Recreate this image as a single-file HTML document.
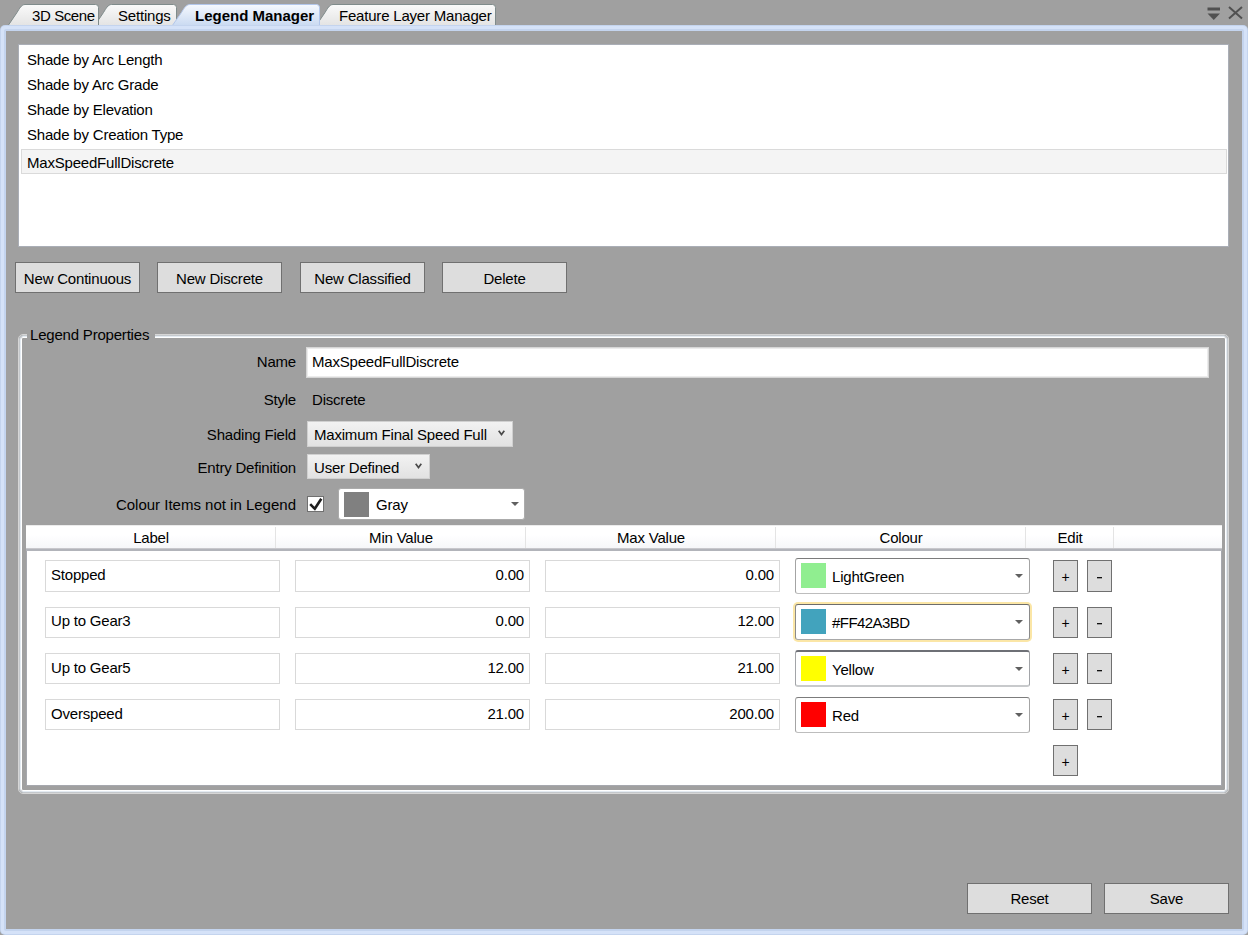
<!DOCTYPE html>
<html><head><meta charset="utf-8">
<style>
html,body{margin:0;padding:0;width:1248px;height:935px;overflow:hidden;background:#a0a0a0;}
body{position:relative;font-family:"Liberation Sans",sans-serif;font-size:15px;letter-spacing:-0.2px;color:#000;}
.a{position:absolute;box-sizing:border-box;}
.t{position:absolute;line-height:20px;white-space:nowrap;}
/* frame */
#frame{left:0;top:25px;width:1248px;height:910px;border-radius:5px;background:#c4d4ee;}
#frame2{left:1px;top:26px;width:1246px;height:908px;border-radius:4px;background:#d5e2f8;}
#frame3{left:4px;top:29px;width:1240px;height:902px;border-radius:2px;background:#c4d4ee;}
#inner{left:6px;top:31px;width:1236px;height:898px;background:#a0a0a0;}
.btn{position:absolute;box-sizing:border-box;background:#dddddd;border:1px solid #707070;text-align:center;}
.tb{position:absolute;box-sizing:border-box;background:#fff;border:1px solid #d9d9d9;}
.combo{position:absolute;box-sizing:border-box;background:#fff;border:1px solid;border-color:#7c7c7c #a4a4a4 #bdbdbd #a4a4a4;border-radius:3px;}
.sw{position:absolute;width:25px;height:25px;}
.arr{position:absolute;width:0;height:0;border-left:4.5px solid transparent;border-right:4.5px solid transparent;border-top:4.5px solid #606060;}
.pm{position:absolute;box-sizing:border-box;background:#dddddd;border:1px solid #707070;width:25px;height:31px;text-align:center;font-size:14px;}
</style></head><body>

<!-- tabs -->
<svg class="a" style="left:0;top:0" width="520" height="27">
  <defs>
    <linearGradient id="tg" x1="0" y1="0" x2="0" y2="1"><stop offset="0" stop-color="#fafafa"/><stop offset="1" stop-color="#e4e4e4"/></linearGradient>
    <linearGradient id="sg" x1="0" y1="0" x2="0" y2="1"><stop offset="0" stop-color="#f6f9fe"/><stop offset="1" stop-color="#c9d9f1"/></linearGradient>
  </defs>
<path d="M316.5,25 L325.0,12.5 C327.5,8.5 329.5,4.5 333.0,4.5 L492.5,4.5 Q495.5,4.5 495.5,7.5 L495.5,25 Z" fill="url(#tg)"/><path d="M316.5,25 L325.0,12.5 C327.5,8.5 329.5,4.5 333.0,4.5 L492.5,4.5 Q495.5,4.5 495.5,7.5 L495.5,25" fill="none" stroke="#7f8b8b" stroke-width="1"/><path d="M95,25 L103.5,12.5 C106,8.5 108,4.5 111.5,4.5 L173.5,4.5 Q176.5,4.5 176.5,7.5 L176.5,25 Z" fill="url(#tg)"/><path d="M95,25 L103.5,12.5 C106,8.5 108,4.5 111.5,4.5 L173.5,4.5 Q176.5,4.5 176.5,7.5 L176.5,25" fill="none" stroke="#7f8b8b" stroke-width="1"/><path d="M8.5,25 L17.0,12.5 C19.5,8.5 21.5,4.5 25.0,4.5 L95.5,4.5 Q98.5,4.5 98.5,7.5 L98.5,25 Z" fill="url(#tg)"/><path d="M8.5,25 L17.0,12.5 C19.5,8.5 21.5,4.5 25.0,4.5 L95.5,4.5 Q98.5,4.5 98.5,7.5 L98.5,25" fill="none" stroke="#7f8b8b" stroke-width="1"/><path d="M172,26 L181.5,12.5 C184,8.5 186,4.5 190,4.5 L316.5,4.5 Q319.5,4.5 319.5,7.5 L319.5,26 Z" fill="url(#sg)"/><path d="M172,26 L181.5,12.5 C184,8.5 186,4.5 190,4.5 L316.5,4.5 Q319.5,4.5 319.5,7.5 L319.5,26" fill="none" stroke="#b2c6ea" stroke-width="1"/>
</svg>
<div class="t" style="left:32px;top:6px;letter-spacing:-0.4px;">3D Scene</div>
<div class="t" style="left:118px;top:6px;">Settings</div>
<div class="t" style="left:195px;top:6px;font-weight:bold;letter-spacing:0;">Legend Manager</div>
<div class="t" style="left:339px;top:6px;">Feature Layer Manager</div>

<!-- top-right icons -->
<svg class="a" style="left:1200px;top:0" width="48" height="25">
  <rect x="7.5" y="7.5" width="12.5" height="3" fill="#505050"/>
  <path d="M7.5,13.5 L20,13.5 L13.75,20 Z" fill="#505050"/>
  <path d="M29,7 L42,18.5 M42,7 L29,18.5" stroke="#505050" stroke-width="2"/>
</svg>

<div class="a" id="frame"></div>
<div class="a" id="frame2"></div>
<div class="a" id="frame3"></div>
<div class="a" id="inner"></div>

<!-- list box -->
<div class="a" style="left:18px;top:44px;width:1211px;height:203px;background:#fff;border:1px solid #aaaeb6;"></div>
<div class="t" style="left:27px;top:50px;">Shade by Arc Length</div>
<div class="t" style="left:27px;top:75px;">Shade by Arc Grade</div>
<div class="t" style="left:27px;top:100px;">Shade by Elevation</div>
<div class="t" style="left:27px;top:125px;">Shade by Creation Type</div>
<div class="a" style="left:21px;top:149px;width:1206px;height:25px;background:#f4f4f4;border:1px solid #dadada;"></div>
<div class="t" style="left:27px;top:153px;">MaxSpeedFullDiscrete</div>

<!-- buttons -->
<div class="btn" style="left:15px;top:262px;width:125px;height:31px;"></div>
<div class="btn" style="left:157px;top:262px;width:125px;height:31px;"></div>
<div class="btn" style="left:300px;top:262px;width:125px;height:31px;"></div>
<div class="btn" style="left:442px;top:262px;width:125px;height:31px;"></div>
<div class="t" style="left:15px;width:125px;text-align:center;top:269px;">New Continuous</div>
<div class="t" style="left:157px;width:125px;text-align:center;top:269px;">New Discrete</div>
<div class="t" style="left:300px;width:125px;text-align:center;top:269px;">New Classified</div>
<div class="t" style="left:442px;width:125px;text-align:center;top:269px;">Delete</div>


<!-- group box -->
<div class="a" style="left:18px;top:334px;width:1211px;height:460px;border:1px solid #d6d6d6;border-radius:5px;"></div>
<div class="a" style="left:19px;top:335px;width:1209px;height:458px;border:1px solid #c4c8cc;border-radius:4px;"></div>
<div class="a" style="left:20px;top:336px;width:1207px;height:456px;border:1px solid #e4ebf2;border-radius:3px;"></div>
<div class="a" style="left:21px;top:337px;width:1205px;height:454px;border:1px solid #ffffff;border-radius:2px;"></div>
<div class="a" style="left:27px;top:325px;width:128px;height:16px;background:#a0a0a0;"></div>
<div class="t" style="left:30px;top:325px;">Legend Properties</div>

<div class="t" style="right:952px;top:352px;">Name</div>
<div class="tb" style="left:306px;top:347px;width:903px;height:31px;border-color:#d6d6d6;box-shadow:inset 0 0 0 1px #ececec;"></div>
<div class="t" style="left:312px;top:352px;">MaxSpeedFullDiscrete</div>

<div class="t" style="right:952px;top:390px;">Style</div>
<div class="t" style="left:312px;top:390px;">Discrete</div>

<div class="t" style="right:952px;top:425px;">Shading Field</div>
<div class="a" style="left:307px;top:421px;width:206px;height:26px;background:linear-gradient(#f2f2f2,#e2e2e2);border:1px solid #d0d0d0;"></div>
<div class="t" style="left:314px;top:425px;">Maximum Final Speed Full</div>
<svg class="a" style="left:497px;top:429px" width="10" height="8"><path d="M1.7,1.8 L4.5,5.6 L7.3,1.8" fill="none" stroke="#4a4a4a" stroke-width="1.7"/></svg>

<div class="t" style="right:952px;top:458px;">Entry Definition</div>
<div class="a" style="left:307px;top:454px;width:123px;height:25px;background:linear-gradient(#f2f2f2,#e2e2e2);border:1px solid #d0d0d0;"></div>
<div class="t" style="left:314px;top:458px;">User Defined</div>
<svg class="a" style="left:414px;top:462px" width="10" height="8"><path d="M1.7,1.8 L4.5,5.6 L7.3,1.8" fill="none" stroke="#4a4a4a" stroke-width="1.7"/></svg>

<div class="t" style="right:952px;top:495px;letter-spacing:0;">Colour Items not in Legend</div>
<div class="a" style="left:307px;top:496px;width:17px;height:16px;background:#fff;border:1px solid #707070;"></div>
<svg class="a" style="left:307px;top:496px" width="17" height="17"><path d="M3.2,8.2 L7.8,12.8 L14.3,2.8" fill="none" stroke="#1e1e1e" stroke-width="2.6"/></svg>
<div class="combo" style="left:338px;top:488px;width:187px;height:32px;border-color:#ababab;"></div>
<div class="sw" style="left:344px;top:492px;background:#808080;"></div>
<div class="t" style="left:376px;top:495px;">Gray</div>
<div class="arr" style="left:511px;top:502px;"></div>

<!-- grid -->
<div class="a" style="left:26px;top:525px;width:1196px;height:261px;background:#fff;border:1px solid #a6a8ae;border-top:none;"></div>
<div class="a" style="left:26px;top:525px;width:1196px;height:24px;background:linear-gradient(#ffffff 0%,#ffffff 40%,#f6f7f9 100%);border-top:1px solid #ececec;border-bottom:1px solid #c8c8cc;"></div>
<div class="a" style="left:26px;top:549px;width:1196px;height:2px;background:#b2b4ba;"></div>
<div class="a" style="left:275px;top:527px;width:1px;height:21px;background:#e4e4e4;"></div>
<div class="a" style="left:525px;top:527px;width:1px;height:21px;background:#e4e4e4;"></div>
<div class="a" style="left:775px;top:527px;width:1px;height:21px;background:#e4e4e4;"></div>
<div class="a" style="left:1025px;top:527px;width:1px;height:21px;background:#e4e4e4;"></div>
<div class="a" style="left:1113px;top:527px;width:1px;height:21px;background:#e4e4e4;"></div>
<div class="t" style="left:26px;width:250px;text-align:center;top:528px;">Label</div>
<div class="t" style="left:276px;width:250px;text-align:center;top:528px;">Min Value</div>
<div class="t" style="left:526px;width:250px;text-align:center;top:528px;">Max Value</div>
<div class="t" style="left:776px;width:250px;text-align:center;top:528px;">Colour</div>
<div class="t" style="left:1026px;width:88px;text-align:center;top:528px;">Edit</div>

<div class="tb" style="left:45px;top:560px;width:235px;height:32px;"></div>
<div class="t" style="left:51px;top:565px;">Stopped</div>
<div class="tb" style="left:295px;top:560px;width:235px;height:32px;"></div>
<div class="t" style="left:295px;width:229px;text-align:right;top:565px;">0.00</div>
<div class="tb" style="left:545px;top:560px;width:235px;height:32px;"></div>
<div class="t" style="left:545px;width:229px;text-align:right;top:565px;">0.00</div>
<div class="combo" style="left:795px;top:558px;width:235px;height:36px;"></div>
<div class="sw" style="left:801px;top:563px;background:#90ee90;"></div>
<div class="t" style="left:832px;top:567px;">LightGreen</div>
<div class="arr" style="left:1015px;top:574px;"></div>
<div class="pm" style="left:1053px;top:560px;height:32px;"></div>
<div class="t" style="left:1053px;width:25px;text-align:center;top:567px;font-size:14px;">+</div>
<div class="pm" style="left:1087px;top:560px;height:32px;"></div>
<div class="a" style="left:1097px;top:577px;width:5px;height:1px;background:#111;box-shadow:0 1px 0 rgba(0,0,0,0.3);"></div>

<div class="tb" style="left:45px;top:607px;width:235px;height:31px;"></div>
<div class="t" style="left:51px;top:611px;">Up to Gear3</div>
<div class="tb" style="left:295px;top:607px;width:235px;height:31px;"></div>
<div class="t" style="left:295px;width:229px;text-align:right;top:611px;">0.00</div>
<div class="tb" style="left:545px;top:607px;width:235px;height:31px;"></div>
<div class="t" style="left:545px;width:229px;text-align:right;top:611px;">12.00</div>
<div class="combo" style="left:795px;top:604px;width:235px;height:36px;box-shadow:0 0 0 2px #fbe6a6;border-color:#6c6c6c #8a8a8a #a8a8a8 #8a8a8a;"></div>
<div class="sw" style="left:801px;top:609px;background:#42a3bd;"></div>
<div class="t" style="left:832px;top:613px;letter-spacing:-0.55px;">#FF42A3BD</div>
<div class="arr" style="left:1015px;top:620px;"></div>
<div class="pm" style="left:1053px;top:607px;"></div>
<div class="t" style="left:1053px;width:25px;text-align:center;top:613px;font-size:14px;">+</div>
<div class="pm" style="left:1087px;top:607px;"></div>
<div class="a" style="left:1097px;top:623px;width:5px;height:1px;background:#111;box-shadow:0 1px 0 rgba(0,0,0,0.3);"></div>

<div class="tb" style="left:45px;top:653px;width:235px;height:31px;"></div>
<div class="t" style="left:51px;top:658px;">Up to Gear5</div>
<div class="tb" style="left:295px;top:653px;width:235px;height:31px;"></div>
<div class="t" style="left:295px;width:229px;text-align:right;top:658px;">12.00</div>
<div class="tb" style="left:545px;top:653px;width:235px;height:31px;"></div>
<div class="t" style="left:545px;width:229px;text-align:right;top:658px;">21.00</div>
<div class="combo" style="left:795px;top:650px;width:235px;height:37px;border-width:2px 1px 2px 1px;border-color:#6e7076 #a2a4a8 #c8cacc #a2a4a8;"></div>
<div class="sw" style="left:801px;top:656px;background:#ffff00;"></div>
<div class="t" style="left:832px;top:660px;">Yellow</div>
<div class="arr" style="left:1015px;top:667px;"></div>
<div class="pm" style="left:1053px;top:653px;"></div>
<div class="t" style="left:1053px;width:25px;text-align:center;top:660px;font-size:14px;">+</div>
<div class="pm" style="left:1087px;top:653px;"></div>
<div class="a" style="left:1097px;top:670px;width:5px;height:1px;background:#111;box-shadow:0 1px 0 rgba(0,0,0,0.3);"></div>

<div class="tb" style="left:45px;top:699px;width:235px;height:31px;"></div>
<div class="t" style="left:51px;top:704px;">Overspeed</div>
<div class="tb" style="left:295px;top:699px;width:235px;height:31px;"></div>
<div class="t" style="left:295px;width:229px;text-align:right;top:704px;">21.00</div>
<div class="tb" style="left:545px;top:699px;width:235px;height:31px;"></div>
<div class="t" style="left:545px;width:229px;text-align:right;top:704px;">200.00</div>
<div class="combo" style="left:795px;top:697px;width:235px;height:36px;"></div>
<div class="sw" style="left:801px;top:702px;background:#ff0000;"></div>
<div class="t" style="left:832px;top:706px;">Red</div>
<div class="arr" style="left:1015px;top:713px;"></div>
<div class="pm" style="left:1053px;top:699px;"></div>
<div class="t" style="left:1053px;width:25px;text-align:center;top:706px;font-size:14px;">+</div>
<div class="pm" style="left:1087px;top:699px;"></div>
<div class="a" style="left:1097px;top:716px;width:5px;height:1px;background:#111;box-shadow:0 1px 0 rgba(0,0,0,0.3);"></div>

<div class="pm" style="left:1053px;top:745px;"></div>
<div class="t" style="left:1053px;width:25px;text-align:center;top:752px;font-size:14px;">+</div>

<div class="btn" style="left:967px;top:883px;width:125px;height:31px;"></div>
<div class="btn" style="left:1104px;top:883px;width:125px;height:31px;"></div>
<div class="t" style="left:967px;width:125px;text-align:center;top:889px;">Reset</div>
<div class="t" style="left:1104px;width:125px;text-align:center;top:889px;">Save</div>

</body></html>
